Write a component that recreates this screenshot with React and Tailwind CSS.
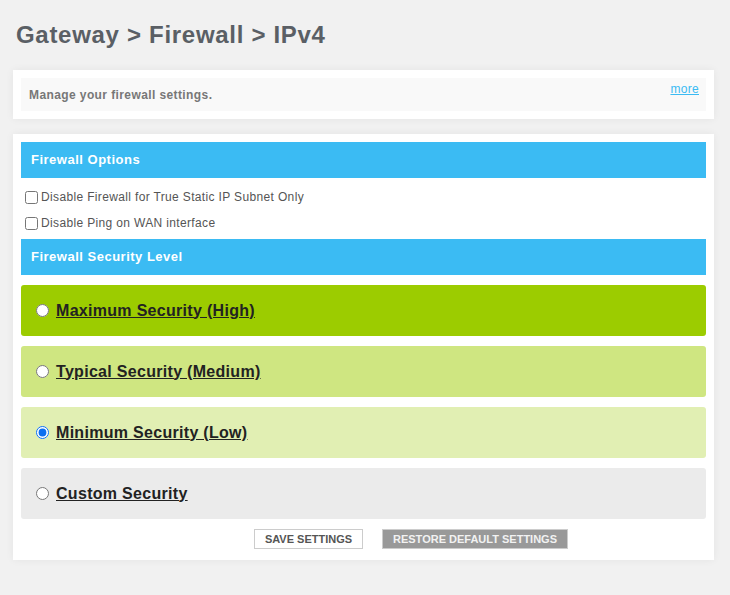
export default function App() {
  const levels = [
    { label: "Maximum Security (High)", bg: "bg-[#9ccc00]", checked: false },
    { label: "Typical Security (Medium)", bg: "bg-[#cfe681]", checked: false },
    { label: "Minimum Security (Low)", bg: "bg-[#e1efb3]", checked: true },
    { label: "Custom Security", bg: "bg-[#ebebeb]", checked: false },
  ];

  return (
    <div className="min-h-[595px] w-[730px] bg-[#f1f1f1] px-[13px] pt-[20px] pb-[35px] font-['Liberation_Sans',Arial,sans-serif]">
      <h1 className="pl-[3px] text-[24px] font-bold leading-[30px] tracking-[0.7px] text-[#5a5f65]">
        Gateway &gt; Firewall &gt; IPv4
      </h1>

      <section className="mt-[20px] w-[701px] bg-white p-2 shadow-[0_0_8px_rgba(0,0,0,0.06)]">
        <div className="flex h-[33px] items-start justify-between bg-[#f9f9f9] pl-2 pr-[7px]">
          <p className="pt-[10px] text-[12px] font-bold leading-[14px] tracking-[0.4px] text-[#777]">
            Manage your firewall settings.
          </p>
          <a href="#" className="pt-[4px] text-[12px] leading-[14px] tracking-[0.3px] text-[#3bbbf3] underline">
            more
          </a>
        </div>
      </section>

      <section className="mt-[15px] w-[701px] bg-white px-2 pt-2 pb-[11px] shadow-[0_0_8px_rgba(0,0,0,0.06)]">
        <SectionHeader>Firewall Options</SectionHeader>
        <div className="flex flex-col gap-[10px] pt-[11px] pb-[8px] pl-[4px]">
          <Check label="Disable Firewall for True Static IP Subnet Only" />
          <Check label="Disable Ping on WAN interface" />
        </div>
        <SectionHeader>Firewall Security Level</SectionHeader>

        <div className="mt-[10px] flex flex-col gap-[10px]">
          {levels.map((lvl) => (
            <label
              key={lvl.label}
              className={`flex h-[51px] items-center gap-[7px] rounded-[3px] pl-[15px] ${lvl.bg}`}
            >
              <input
                type="radio"
                name="level"
                defaultChecked={lvl.checked}
                className="m-0 h-[13px] w-[13px] accent-[#0b6ff0]"
              />
              <span className="text-[16px] font-bold tracking-[0.3px] text-[#222] underline">
                {lvl.label}
              </span>
            </label>
          ))}
        </div>

        <div className="mt-[10px] flex gap-[19px] pl-[233px]">
          <button className="h-[20px] w-[109px] border border-[#ccc] bg-white text-[11px] font-bold text-[#555]">
            SAVE SETTINGS
          </button>
          <button className="h-[20px] w-[186px] border border-[#ccc] bg-[#999] text-[11px] font-bold text-[#f2f2f2]">
            RESTORE DEFAULT SETTINGS
          </button>
        </div>
      </section>
    </div>
  );
}

function SectionHeader({ children }) {
  return (
    <div className="flex h-[36px] items-center bg-[#3bbbf3] pl-[10px] text-[13px] font-bold tracking-[0.5px] text-white">
      {children}
    </div>
  );
}

function Check({ label }) {
  return (
    <label className="flex items-center gap-[3px] text-[12px] leading-[16px] tracking-[0.35px] text-[#555]">
      <input type="checkbox" className="m-0 h-[13px] w-[13px]" />
      {label}
    </label>
  );
}
